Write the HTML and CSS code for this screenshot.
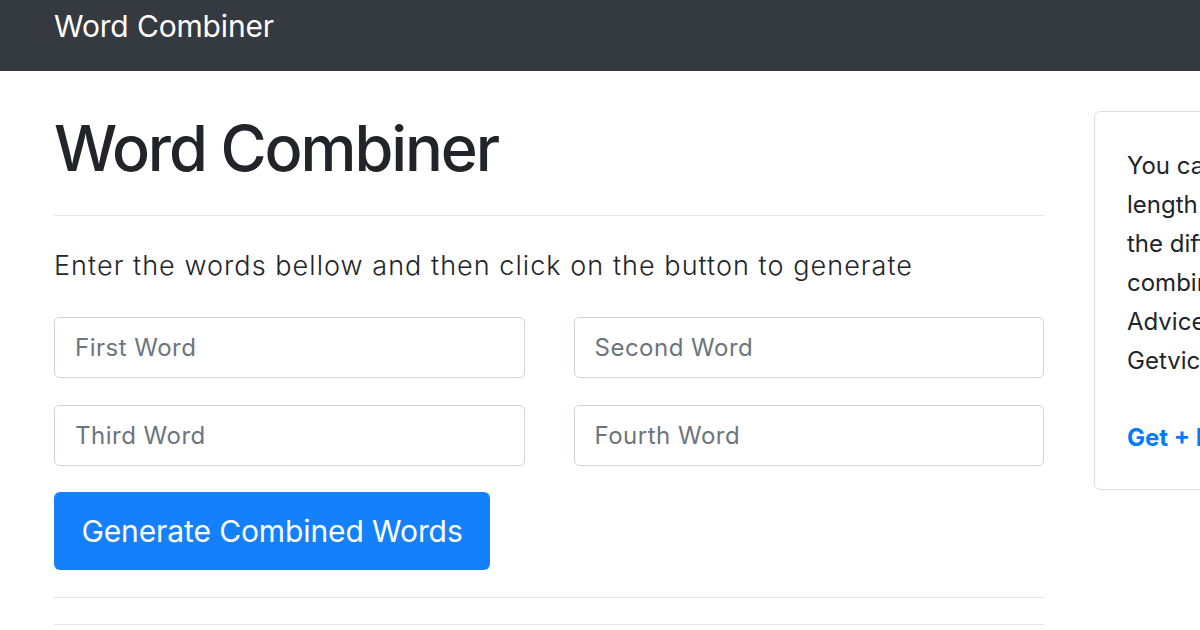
FILE: index.html
```html
<!DOCTYPE html>
<html lang="en">
  <head>
    <meta charset="UTF-8" />
    <meta name="viewport" content="width=device-width, initial-scale=1.0" />
    <title>Word Combiner</title>
    <link rel="stylesheet" href="styles.css">
  </head>
  <body>
    <nav class="navbar">
      <a class="brand" href="#">Word Combiner</a>
    </nav>
    <div class="page">
      <main class="main-col">
        <h1>Word Combiner</h1>
        <hr />
        <p class="lead">Enter the words bellow and then click on the button to generate</p>
        <form id="wordsForm" class="words-form">
          <input type="text" class="field" placeholder="First Word" />
          <input type="text" class="field" placeholder="Second Word" />
          <input type="text" class="field" placeholder="Third Word" />
          <input type="text" class="field" placeholder="Fourth Word" />
          <button type="submit" class="btn">Generate Combined Words</button>
        </form>
        <hr class="rule-bottom" />
        <hr class="rule-last" />
      </main>
      <aside class="card">
        <p>
          You can combine words of any<br />
          length and quickly check all<br />
          the different possible<br />
          combinations with this tool.<br />
          Advice: if you need a domain, try<br />
          Getvico for naming ideas.
        </p>
        <a class="card-link" href="#">Get + Ideas</a>
      </aside>
    </div>
  </body>
</html>
```
FILE: styles.css
```css
html,
body {
  margin: 0;
  overflow: hidden;
}

body {
  font-family: Inter, "Liberation Sans", sans-serif;
  color: #212529;
  background: #ffffff;
}

.navbar {
  height: 71px;
  background-color: #343a40;
  padding: 0 54px;
  display: flex;
  align-items: center;
}

.brand {
  color: #ffffff;
  text-decoration: none;
  font-size: 30px;
  line-height: 1;
  letter-spacing: -0.15px;
  margin-top: -20px;
}

.page {
  display: grid;
  grid-template-columns: 990px 340px;
  column-gap: 50px;
  padding: 40px 0 0 54px;
  width: 1500px;
}

h1 {
  margin: 0;
  font-size: 63px;
  font-weight: 500;
  line-height: 1.2;
  letter-spacing: -2.1px;
}

hr {
  margin: 28px 0 0;
  border: 0;
  border-top: 1px solid rgba(0, 0, 0, 0.1);
}

.lead {
  margin: 30px 0 0;
  font-size: 27px;
  font-weight: 300;
  line-height: 1.5;
  letter-spacing: 1.05px;
}

.words-form {
  margin-top: 31px;
  display: grid;
  grid-template-columns: 1fr 1fr;
  column-gap: 49px;
  row-gap: 27px;
}

.field {
  height: 61px;
  box-sizing: border-box;
  padding: 0 20px;
  font-family: inherit;
  font-size: 24px;
  letter-spacing: 0.5px;
  color: #495057;
  border: 1px solid #ced4da;
  border-radius: 5px;
}

.field::placeholder {
  color: #6c757d;
}

.btn {
  justify-self: start;
  grid-column: 1 / 2;
  width: 436px;
  height: 78px;
  margin-top: -1px;
  background-color: #1580fb;
  color: #ffffff;
  border: none;
  border-radius: 6px;
  font-family: inherit;
  font-size: 30px;
  letter-spacing: -0.1px;
  cursor: pointer;
}

.rule-bottom {
  margin-top: 27px;
}

.rule-last {
  margin-top: 26px;
}

.card {
  align-self: start;
  border: 1px solid rgba(0, 0, 0, 0.125);
  border-radius: 6px;
  padding: 34px 32px 32px;
  font-size: 24px;
  line-height: 39px;
}

.card p {
  margin: 0 0 38px;
  white-space: nowrap;
}

.card-link {
  color: #007bff;
  font-weight: 700;
  text-decoration: none;
}
```
